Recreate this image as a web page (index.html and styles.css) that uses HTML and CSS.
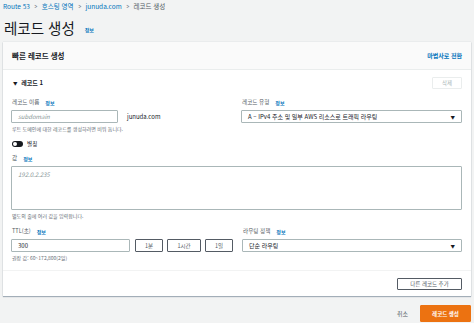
FILE: index.html
```html
<!DOCTYPE html>
<html lang="ko">
<head>
    <meta charset="UTF-8">
    <title>레코드 생성</title>
    <link rel="stylesheet" href="styles.css">
</head>
<body>
    <div class="page">
        <nav class="crumbs">
            <a>Route 53</a><span class="sep">&gt;</span>
            <a>호스팅 영역</a><span class="sep">&gt;</span>
            <a>junuda.com</a><span class="sep">&gt;</span>
            <span class="current">레코드 생성</span>
        </nav>
        <h1 class="title">레코드 생성 <a class="info">정보</a></h1>

        <div class="card">
            <div class="card-head">
                <span class="card-title">빠른 레코드 생성</span>
                <a class="switch">마법사로 전환</a>
            </div>
            <div class="record">
                <div class="record-top">
                    <span class="record-name"><span class="caret">▼</span> 레코드 1</span>
                    <button class="btn btn-off">삭제</button>
                </div>
                <div class="row">
                    <div class="col">
                        <div class="label">레코드 이름 <a class="info">정보</a></div>
                        <div class="name-line">
                            <div class="input placeholder">subdomain</div>
                            <span class="domain">junuda.com</span>
                        </div>
                        <div class="hint">루트 도메인에 대한 레코드를 생성하려면 비워 둡니다.</div>
                        <div class="toggle-line"><span class="toggle"></span>별칭</div>
                    </div>
                    <div class="col">
                        <div class="label">레코드 유형 <a class="info">정보</a></div>
                        <div class="input select">A – IPv4 주소 및 일부 AWS 리소스로 트래픽 라우팅<span class="arrow">▼</span></div>
                    </div>
                </div>
                <div class="field">
                    <div class="label">값 <a class="info">정보</a></div>
                    <div class="textarea placeholder">192.0.2.235</div>
                    <div class="hint">별도의 줄에 여러 값을 입력합니다.</div>
                </div>
                <div class="row">
                    <div class="col">
                        <div class="label">TTL(초) <a class="info">정보</a></div>
                        <div class="ttl-line">
                            <div class="input ttl">300</div>
                            <button class="btn">1분</button>
                            <button class="btn">1시간</button>
                            <button class="btn">1일</button>
                        </div>
                        <div class="hint">권장 값: 60~172,800(2일)</div>
                    </div>
                    <div class="col">
                        <div class="label">라우팅 정책 <a class="info">정보</a></div>
                        <div class="input select">단순 라우팅<span class="arrow">▼</span></div>
                    </div>
                </div>
            </div>
            <div class="card-foot">
                <button class="btn">다른 레코드 추가</button>
            </div>
        </div>

        <div class="actions">
            <a class="cancel">취소</a>
            <button class="btn btn-primary">레코드 생성</button>
        </div>
    </div>
</body>
</html>
```

FILE: styles.css
```css
* { box-sizing: border-box; }
body { margin: 0; background: #f2f3f3; font-family: "Noto Sans CJK KR", "Noto Sans", sans-serif; color: #16191f; }
a { color: #0073bb; }
.page { padding: 0 3px; width: 474px; height: 323px; overflow: hidden; }

.crumbs { display: flex; align-items: center; height: 12px; font-size: 6.5px; color: #0073bb; }
.crumbs .sep { color: #687078; margin: 0 4px; font-size: 7px; transform: scaleX(0.7); }
.crumbs .current { color: #545b64; }

.title { margin: 0; height: 30px; display: flex; align-items: center; gap: 4px; font-size: 14.5px; font-weight: 400; padding-left: 1px; }
.title .info { font-size: 5px; font-weight: 700; margin-top: 4px; }
.info { font-size: 5px; font-weight: 700; color: #0073bb; margin-left: 6px; }

.card { background: #fff; box-shadow: 0 1px 1px rgba(0, 31, 63, 0.3), 0 0 1px rgba(0, 31, 63, 0.2); width: 468px; }
.card-head { height: 28px; background: #fafafa; border-bottom: 1px solid #eaeded; display: flex; align-items: center; justify-content: space-between; padding: 0 9px; }
.card-title { font-size: 7.5px; font-weight: 700; }
.switch { font-size: 6px; font-weight: 700; }

.record { padding: 0 9px 0 8px; border-bottom: 1px solid #f2f3f3; height: 201px; }
.record-top { height: 25px; display: flex; align-items: center; justify-content: space-between; padding-left: 2px; }
.record-name { font-size: 6px; font-weight: 700; }
.caret { font-size: 4.5px; margin-right: 2px; }

.btn { font-family: inherit; font-size: 5.5px; background: #fff; border: 1px solid #545b64; color: #545b64; border-radius: 1px; height: 13px; padding: 0 9px; white-space: nowrap; }
.btn-off { border-color: #eaeded; color: #aab7b8; height: 12px; width: 30px; padding: 0; margin-top: 1px; }
.btn-primary { background: #ec7211; border-color: #ec7211; color: #fff; font-weight: 700; height: 17px; width: 51px; padding: 0; }

.row { display: flex; gap: 9px; }
.col { flex: 1; }
.label { font-size: 5.6px; color: #545b64; height: 10px; display: flex; align-items: center; padding-left: 1px; margin-top: 2px; margin-bottom: 3px; }
.input { height: 13px; border: 1px solid #aab7b8; border-radius: 1px; font-size: 6px; display: flex; align-items: center; padding: 0 6px; background: #fff; }
.placeholder { color: #879596; font-style: italic; }
.name-line { display: flex; align-items: center; gap: 9px; }
.name-line .input { width: 107px; }
.domain { font-size: 6px; }
.hint { font-size: 5px; color: #687078; height: 11px; display: flex; align-items: center; padding-left: 1px; }
.toggle-line { display: flex; align-items: center; gap: 4px; font-size: 5.6px; height: 12px; margin-top: 4px; padding-left: 1px; }
.toggle { width: 11px; height: 6px; border-radius: 3px; background: #16191f; position: relative; }
.toggle::after { content: ""; position: absolute; left: 1px; top: 1px; width: 4px; height: 4px; border-radius: 50%; background: #fff; }
.select { justify-content: space-between; color: #16191f; }
.arrow { font-size: 4.5px; }

.field { margin-top: 3px; }
.textarea { height: 44px; border: 1px solid #aab7b8; border-radius: 1px; font-size: 6px; padding: 3px 6px; }
.field .hint { margin-bottom: 3px; }

.ttl-line { display: flex; gap: 4px; }
.ttl-line .input { width: 119px; margin-right: 1px; }
.ttl-line .btn { width: 28px; padding: 0; }
.ttl-line .btn:nth-child(3) { width: 34px; }

.card-foot { height: 25px; display: flex; align-items: center; justify-content: flex-end; padding-right: 9px; }
.card-foot .btn { width: 65px; padding: 0; height: 12px; }

.actions { display: flex; align-items: center; justify-content: flex-end; gap: 12px; margin-top: 9px; }
.cancel { font-size: 6px; color: #545b64; }
```
